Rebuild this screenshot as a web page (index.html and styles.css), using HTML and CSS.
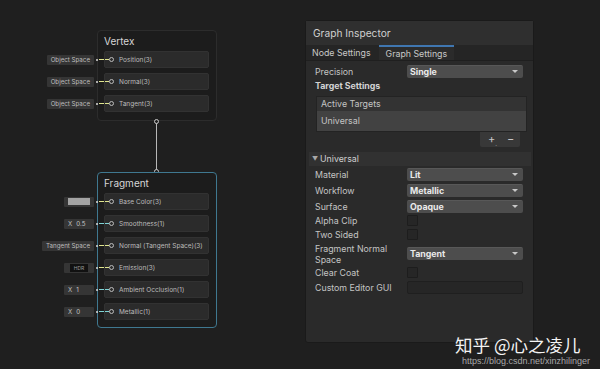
FILE: index.html
```html
<!DOCTYPE html>
<html lang="en">
<head>
    <meta charset="UTF-8">
    <title>Shader Graph</title>
    <link rel="stylesheet" href="styles.css">
</head>
<body>
    <div class="canvas">
        <!-- graph nodes -->
        <div class="node node-vertex">
            <div class="node-title">Vertex</div>
            <div class="port">
                <div class="port-in"><span class="chip">Object Space</span><span class="dot"></span><span class="wire v3"></span></div>
                <div class="slot"><span class="wire v3 short"></span><span class="ring v3"></span>Position(3)</div>
            </div>
            <div class="port">
                <div class="port-in"><span class="chip">Object Space</span><span class="dot"></span><span class="wire v3"></span></div>
                <div class="slot"><span class="wire v3 short"></span><span class="ring v3"></span>Normal(3)</div>
            </div>
            <div class="port">
                <div class="port-in"><span class="chip">Object Space</span><span class="dot"></span><span class="wire v3"></span></div>
                <div class="slot"><span class="wire v3 short"></span><span class="ring v3"></span>Tangent(3)</div>
            </div>
        </div>

        <div class="edge"></div>

        <div class="node node-fragment">
            <div class="node-title">Fragment</div>
            <div class="port">
                <div class="port-in"><span class="chip chip-color"><span class="swatch"></span></span><span class="dot"></span><span class="wire v3"></span></div>
                <div class="slot"><span class="wire v3 short"></span><span class="ring v3"></span>Base Color(3)</div>
            </div>
            <div class="port">
                <div class="port-in"><span class="chip chip-num"><span class="axis">X</span><span class="num">0.5</span></span><span class="dot"></span><span class="wire v1"></span></div>
                <div class="slot"><span class="wire v1 short"></span><span class="ring v1"></span>Smoothness(1)</div>
            </div>
            <div class="port">
                <div class="port-in"><span class="chip">Tangent Space</span><span class="dot"></span><span class="wire v3"></span></div>
                <div class="slot"><span class="wire v3 short"></span><span class="ring v3"></span>Normal (Tangent Space)(3)</div>
            </div>
            <div class="port">
                <div class="port-in"><span class="chip chip-color"><span class="hdr">HDR</span></span><span class="dot"></span><span class="wire v3"></span></div>
                <div class="slot"><span class="wire v3 short"></span><span class="ring v3"></span>Emission(3)</div>
            </div>
            <div class="port">
                <div class="port-in"><span class="chip chip-num"><span class="axis">X</span><span class="num">1</span></span><span class="dot"></span><span class="wire v1"></span></div>
                <div class="slot"><span class="wire v1 short"></span><span class="ring v1"></span>Ambient Occlusion(1)</div>
            </div>
            <div class="port">
                <div class="port-in"><span class="chip chip-num"><span class="axis">X</span><span class="num">0</span></span><span class="dot"></span><span class="wire v1"></span></div>
                <div class="slot"><span class="wire v1 short"></span><span class="ring v1"></span>Metallic(1)</div>
            </div>
        </div>

        <!-- floating inspector window -->
        <div class="inspector">
            <div class="inspector-header">Graph Inspector</div>
            <div class="tabs">
                <div class="tab">Node Settings</div>
                <div class="tab active">Graph Settings</div>
            </div>
            <div class="inspector-body">
                <div class="field field-first">
                    <span class="field-label">Precision</span>
                    <span class="dropdown">Single</span>
                </div>
                <div class="subhead">Target Settings</div>
                <div class="target-list">
                    <div class="list-head">Active Targets</div>
                    <div class="list-item">Universal</div>
                </div>
                <div class="list-footer">
                    <div class="list-buttons"><span>+<sub>.</sub></span><span>&minus;</span></div>
                </div>
                <div class="foldout"><span class="arrow">&#9660;</span>Universal</div>
                <div class="field">
                    <span class="field-label">Material</span>
                    <span class="dropdown">Lit</span>
                </div>
                <div class="field">
                    <span class="field-label">Workflow</span>
                    <span class="dropdown">Metallic</span>
                </div>
                <div class="field">
                    <span class="field-label">Surface</span>
                    <span class="dropdown">Opaque</span>
                </div>
                <div class="field field-small">
                    <span class="field-label">Alpha Clip</span>
                    <span class="checkbox"></span>
                </div>
                <div class="field field-small">
                    <span class="field-label">Two Sided</span>
                    <span class="checkbox"></span>
                </div>
                <div class="field field-tall">
                    <span class="field-label">Fragment Normal Space</span>
                    <span class="dropdown">Tangent</span>
                </div>
                <div class="field field-small">
                    <span class="field-label">Clear Coat</span>
                    <span class="checkbox"></span>
                </div>
                <div class="field">
                    <span class="field-label">Custom Editor GUI</span>
                    <span class="textbox"></span>
                </div>
            </div>
        </div>

        <div class="watermark">
            <div class="wm-name">知乎 @心之凌儿</div>
            <div class="wm-url">https://blog.csdn.net/xinzhilinger</div>
        </div>
    </div>
</body>
</html>
```

FILE: styles.css
```css
body {
    margin: 0;
    background-color: #1f1f1f;
    font-family: Inter, "Liberation Sans", Arial, sans-serif;
}
.canvas {
    position: relative;
    width: 600px;
    height: 369px;
    overflow: hidden;
    background-color: #1f1f1f;
}

/* nodes */
.node {
    position: absolute;
    left: 97px;
    width: 120px;
    padding: 0 7px 7px 6px;
    box-sizing: border-box;
    background-color: #1c1c1c;
    border: 1px solid #2c2c2c;
    border-radius: 4px;
    display: flex;
    flex-direction: column;
    gap: 5px;
}
.node-vertex {
    top: 30px;
    height: 91px;
}
.node-fragment {
    top: 172px;
    height: 156px;
    border-color: #3f7890;
}
.node-title {
    height: 15px;
    line-height: 21px;
    font-size: 10px;
    color: #d6d6d6;
}
.port {
    display: flex;
    height: 17px;
    margin-left: -62px;
}
.port-in {
    width: 62px;
    display: flex;
    justify-content: flex-end;
    align-items: center;
}
.chip {
    height: 10px;
    line-height: 10px;
    padding: 0 4px;
    font-size: 6.2px;
    color: #bdbdbd;
    background-color: #353535;
    border-radius: 1px;
    white-space: nowrap;
}
.chip-color {
    width: 22px;
    display: flex;
    align-items: center;
}
.swatch {
    width: 22px;
    height: 7px;
    background-color: #a3a3a3;
}
.hdr {
    width: 18px;
    height: 8px;
    margin-left: 2px;
    background-color: #111;
    color: #9a9a9a;
    font-size: 5px;
    line-height: 8px;
    text-align: center;
}
.chip-num {
    width: 22px;
    display: flex;
    gap: 4px;
}
.num {
    color: #c8c8c8;
}
.dot {
    width: 2px;
    height: 2px;
    margin-left: 2px;
    background-color: #d8d8d8;
    border-radius: 1px;
}
.wire {
    width: 5px;
    height: 1px;
    margin-left: 1px;
}
.wire.short {
    width: 4px;
    margin-left: 0;
}
.v3 {
    background-color: #dfe58f;
    border-color: #dfe58f;
}
.v1 {
    background-color: #7fd3d5;
    border-color: #7fd3d5;
}
.ring {
    width: 3px;
    height: 3px;
    border: 1px solid;
    border-radius: 50%;
    background-color: #2c2c2c;
    margin-right: 5px;
}
.slot {
    flex: 1;
    display: flex;
    align-items: center;
    background-color: #2b2b2b;
    border: 1px solid #323232;
    border-radius: 2px;
    font-size: 6.5px;
    color: #bcbcbc;
    white-space: nowrap;
}
.edge {
    position: absolute;
    left: 156px;
    top: 121px;
    width: 1px;
    height: 51px;
    background-color: #b8b8b8;
}
.edge::before,
.edge::after {
    content: "";
    position: absolute;
    left: -2px;
    width: 3px;
    height: 3px;
    border: 1px solid #c8c8c8;
    border-radius: 50%;
    background-color: #1f1f1f;
}
.edge::before {
    top: -2px;
}
.edge::after {
    bottom: -2px;
}

/* inspector */
.inspector {
    position: absolute;
    left: 305px;
    top: 20px;
    width: 229px;
    height: 323px;
    box-sizing: border-box;
    background-color: #2a2a2a;
    border: 1px solid #1a1a1a;
    border-radius: 3px;
    color: #c4c4c4;
    font-size: 8.8px;
}
.inspector-header {
    height: 24px;
    line-height: 24px;
    padding-left: 7px;
    font-size: 10.2px;
    color: #cfcfcf;
    background-color: #2f2f2f;
}
.tabs {
    display: flex;
    height: 15px;
    background-color: #252525;
    border-bottom: 1px solid #1f1f1f;
}
.tab {
    padding: 0 6px;
    line-height: 15px;
    color: #c8c8c8;
}
.tab.active {
    margin-left: 2px;
    padding: 0 7px;
    line-height: 13px;
    background-color: #2b2b2b;
    border-top: 2px solid #3f76b0;
}
.inspector-body {
    padding: 0 2px 0 3px;
}
.field {
    display: flex;
    align-items: center;
    height: 16px;
    padding-left: 6px;
}
.field-first {
    height: 17px;
    margin-top: 2px;
}
.field-small {
    height: 13.5px;
}
.field-tall {
    height: 25px;
}
.field-label {
    width: 92px;
    line-height: 11px;
}
.field-tall .field-label {
    width: 84px;
    margin-right: 8px;
}
.dropdown {
    position: relative;
    width: 116px;
    height: 13px;
    box-sizing: border-box;
    padding-left: 3px;
    line-height: 12px;
    font-weight: bold;
    color: #eaeaea;
    background-color: #4d4d4d;
    border-top: 1px solid #585858;
    border-radius: 2px;
}
.dropdown::after {
    content: "";
    position: absolute;
    right: 5px;
    top: 4px;
    border-left: 3px solid transparent;
    border-right: 3px solid transparent;
    border-top: 3px solid #c8c8c8;
}
.checkbox {
    width: 9px;
    height: 9px;
    background-color: #262626;
    border: 1px solid #1d1d1d;
    border-radius: 1px;
}
.textbox {
    width: 116px;
    height: 13px;
    box-sizing: border-box;
    background-color: #262626;
    border: 1px solid #1f1f1f;
    border-radius: 2px;
}
.subhead {
    height: 12px;
    line-height: 12px;
    padding-left: 6px;
    font-weight: bold;
    color: #d2d2d2;
}
.target-list {
    margin: 4px 4px 0 7px;
    border: 1px solid #232323;
}
.list-head {
    height: 14px;
    line-height: 14px;
    padding-left: 4px;
    background-color: #333;
}
.list-item {
    height: 20px;
    line-height: 20px;
    padding-left: 4px;
    background-color: #424242;
}
.list-footer {
    display: flex;
    justify-content: flex-end;
    padding-right: 11px;
}
.list-buttons {
    display: flex;
    gap: 10px;
    width: 40px;
    height: 15px;
    box-sizing: border-box;
    padding-left: 8px;
    line-height: 14px;
    font-size: 11px;
    color: #c8c8c8;
    background-color: #383838;
    border-radius: 0 0 2px 2px;
}
.list-buttons sub {
    font-size: 6px;
}
.foldout {
    margin-top: 5px;
    height: 14px;
    line-height: 14px;
    padding-left: 3px;
    background-color: #313131;
    color: #cfcfcf;
}
.arrow {
    font-size: 6px;
    color: #a8a8a8;
    margin-right: 2px;
    vertical-align: 1px;
}

/* watermark */
.watermark {
    position: absolute;
    left: 455px;
    top: 334px;
}
.wm-name {
    font-family: "Noto Sans CJK SC", sans-serif;
    font-size: 17.5px;
    line-height: 22px;
    color: #f4f4f4;
    white-space: nowrap;
}
.wm-url {
    margin-left: 7px;
    font-family: "Liberation Sans", Arial, sans-serif;
    font-size: 9px;
    line-height: 11px;
    color: #a8a8a8;
    white-space: nowrap;
}
```
